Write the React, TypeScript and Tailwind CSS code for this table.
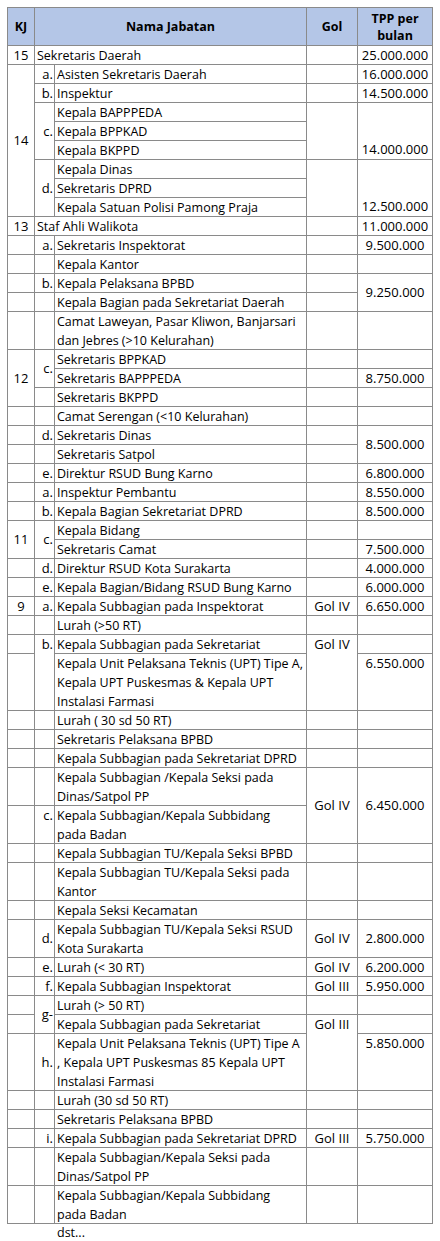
import type { ReactNode } from "react";

type CellProps = { children?: ReactNode; c?: string; v?: string };

const cell = "bg-white flex min-w-0 whitespace-nowrap";

// KJ column
function K({ children, c = "", v = "items-center" }: CellProps) {
  return <div className={`${cell} justify-center ${v} ${c}`}>{children}</div>;
}

// letter column (a. b. c.)
function L({ children, c = "", v = "items-center" }: CellProps) {
  return <div className={`${cell} justify-end pr-[1px] ${v} ${c}`}>{children}</div>;
}

// nama jabatan, single line
function N({ children, c = "" }: CellProps) {
  return <div className={`${cell} items-center pl-[2px] text-[12.5px] ${c}`}>{children}</div>;
}

// nama jabatan, wrapped over several lines
function M({ lines, c = "" }: { lines: string[]; c?: string }) {
  return (
    <div className={`bg-white min-w-0 whitespace-nowrap pl-[2px] text-[12.5px] leading-[19px] ${c}`}>
      {lines.map((l, i) => (
        <div key={i}>{l}</div>
      ))}
    </div>
  );
}

// gol + tpp columns
function V({ children, c = "", v = "items-center" }: CellProps) {
  return <div className={`${cell} justify-center ${v} ${c}`}>{children}</div>;
}

function Head() {
  const h = "bg-[#b4c6e7] flex items-center justify-center font-bold text-[12.5px] row-span-2";
  return (
    <>
      <div className={h}>KJ</div>
      <div className={`${h} col-span-2`}>Nama Jabatan</div>
      <div className={h}>Gol</div>
      <div className={`${h} flex-col leading-[17px]`}>
        <span>TPP per</span>
        <span>bulan</span>
      </div>
    </>
  );
}

export default function App() {
  return (
    <div
      className="min-h-screen bg-white pt-[7px] pl-[7px] text-[13px] leading-[19px] text-black"
      style={{ fontFamily: '"Open Sans", "Noto Sans", sans-serif' }}
    >
      <div className="grid w-[426px] grid-cols-[26px_19px_251px_50px_74px] auto-rows-[18px] gap-px bg-[#8a8a8a] p-px">
        <Head />

        {/* 15 */}
        <K>15</K>
        <N c="col-span-2">Sekretaris Daerah</N>
        <V />
        <V>25.000.000</V>

        {/* 14 */}
        <K c="row-span-8">14</K>
        <L>a.</L>
        <N>Asisten Sekretaris Daerah</N>
        <V />
        <V>16.000.000</V>

        <L>b.</L>
        <N>Inspektur</N>
        <V />
        <V>14.500.000</V>

        <L c="row-span-3">c.</L>
        <N>Kepala BAPPPEDA</N>
        <V c="row-span-3" />
        <V c="row-span-3" v="items-end">14.000.000</V>
        <N>Kepala BPPKAD</N>
        <N>Kepala BKPPD</N>

        <L c="row-span-3">d.</L>
        <N>Kepala Dinas</N>
        <V c="row-span-3" />
        <V c="row-span-3" v="items-end">12.500.000</V>
        <N>Sekretaris DPRD</N>
        <N>Kepala Satuan Polisi Pamong Praja</N>

        {/* 13 */}
        <K>13</K>
        <N c="col-span-2">Staf Ahli Walikota</N>
        <V />
        <V>11.000.000</V>

        {/* 12 */}
        <K />
        <L>a.</L>
        <N>Sekretaris Inspektorat</N>
        <V />
        <V>9.500.000</V>

        <K />
        <L />
        <N>Kepala Kantor</N>
        <V />
        <V />

        <K />
        <L>b.</L>
        <N>Kepala Pelaksana BPBD</N>
        <V />
        <V c="row-span-2">9.250.000</V>

        <K />
        <L />
        <N>Kepala Bagian pada Sekretariat Daerah</N>
        <V />

        <K c="row-span-2" />
        <L c="row-span-2" />
        <M c="row-span-2" lines={["Camat Laweyan, Pasar Kliwon, Banjarsari", "dan Jebres (>10 Kelurahan)"]} />
        <V c="row-span-2" />
        <V c="row-span-2" />

        <K c="row-span-3">12</K>
        <L c="row-span-2">c.</L>
        <N>Sekretaris BPPKAD</N>
        <V />
        <V />

        <N>Sekretaris BAPPPEDA</N>
        <V />
        <V>8.750.000</V>

        <L />
        <N>Sekretaris BKPPD</N>
        <V />
        <V />

        <K />
        <L />
        <N>Camat Serengan (&lt;10 Kelurahan)</N>
        <V />
        <V />

        <K />
        <L>d.</L>
        <N>Sekretaris Dinas</N>
        <V />
        <V c="row-span-2">8.500.000</V>

        <K />
        <L />
        <N>Sekretaris Satpol</N>
        <V />

        <K />
        <L>e.</L>
        <N>Direktur RSUD Bung Karno</N>
        <V />
        <V>6.800.000</V>

        {/* 11 */}
        <K />
        <L>a.</L>
        <N>Inspektur Pembantu</N>
        <V />
        <V>8.550.000</V>

        <K />
        <L>b.</L>
        <N>Kepala Bagian Sekretariat DPRD</N>
        <V />
        <V>8.500.000</V>

        <K c="row-span-2">11</K>
        <L c="row-span-2">c.</L>
        <N>Kepala Bidang</N>
        <V />
        <V />

        <N>Sekretaris Camat</N>
        <V />
        <V>7.500.000</V>

        <K />
        <L>d.</L>
        <N>Direktur RSUD Kota Surakarta</N>
        <V />
        <V>4.000.000</V>

        <K />
        <L>e.</L>
        <N>Kepala Bagian/Bidang RSUD Bung Karno</N>
        <V />
        <V>6.000.000</V>

        {/* 9 */}
        <K>9</K>
        <L>a.</L>
        <N>Kepala Subbagian pada Inspektorat</N>
        <V>Gol IV</V>
        <V>6.650.000</V>

        <K />
        <L />
        <N>Lurah (&gt;50 RT)</N>
        <V />
        <V />

        <K />
        <L c="row-span-4" v="items-start">b.</L>
        <N>Kepala Subbagian pada Sekretariat</N>
        <V c="row-span-4" v="items-start">Gol IV</V>
        <V />

        <K c="row-span-3" />
        <M
          c="row-span-3"
          lines={["Kepala Unit Pelaksana Teknis (UPT) Tipe A,", "Kepala UPT Puskesmas & Kepala UPT", "Instalasi Farmasi"]}
        />
        <V c="row-span-3" v="items-start">6.550.000</V>

        <K />
        <L />
        <N>Lurah ( 30 sd 50 RT)</N>
        <V />
        <V />

        <K />
        <L />
        <N>Sekretaris Pelaksana BPBD</N>
        <V />
        <V />

        <K />
        <L />
        <N>Kepala Subbagian pada Sekretariat DPRD</N>
        <V />
        <V />

        <K c="row-span-2" />
        <L c="row-span-2" />
        <M c="row-span-2" lines={["Kepala Subbagian /Kepala Seksi pada", "Dinas/Satpol PP"]} />
        <V c="row-span-4">Gol IV</V>
        <V c="row-span-4">6.450.000</V>

        <K c="row-span-2" />
        <L c="row-span-2" v="items-start">c.</L>
        <M c="row-span-2" lines={["Kepala Subbagian/Kepala Subbidang", "pada Badan"]} />

        <K />
        <L />
        <N>Kepala Subbagian TU/Kepala Seksi BPBD</N>
        <V />
        <V />

        <K c="row-span-2" />
        <L c="row-span-2" />
        <M c="row-span-2" lines={["Kepala Subbagian TU/Kepala Seksi pada", "Kantor"]} />
        <V c="row-span-2" />
        <V c="row-span-2" />

        <K />
        <L />
        <N>Kepala Seksi Kecamatan</N>
        <V />
        <V />

        <K c="row-span-2" />
        <L c="row-span-2">d.</L>
        <M c="row-span-2" lines={["Kepala Subbagian TU/Kepala Seksi RSUD", "Kota Surakarta"]} />
        <V c="row-span-2">Gol IV</V>
        <V c="row-span-2">2.800.000</V>

        <K />
        <L>e.</L>
        <N>Lurah (&lt; 30 RT)</N>
        <V>Gol IV</V>
        <V>6.200.000</V>

        <K />
        <L>f.</L>
        <N>Kepala Subbagian Inspektorat</N>
        <V>Gol III</V>
        <V>5.950.000</V>

        <K />
        <L c="row-span-2">g-</L>
        <N>Lurah (&gt; 50 RT)</N>
        <V />
        <V />

        <K />
        <N>Kepala Subbagian pada Sekretariat</N>
        <V c="row-span-4" v="items-start">Gol III</V>
        <V />

        <K c="row-span-3" />
        <L c="row-span-3">h.</L>
        <M
          c="row-span-3"
          lines={["Kepala Unit Pelaksana Teknis (UPT) Tipe A", ", Kepala UPT Puskesmas 85 Kepala UPT", "Instalasi Farmasi"]}
        />
        <V c="row-span-3" v="items-start">5.850.000</V>

        <K />
        <L />
        <N>Lurah (30 sd 50 RT)</N>
        <V />
        <V />

        <K />
        <L />
        <N>Sekretaris Pelaksana BPBD</N>
        <V />
        <V />

        <K />
        <L>i.</L>
        <N>Kepala Subbagian pada Sekretariat DPRD</N>
        <V>Gol III</V>
        <V>5.750.000</V>

        <K c="row-span-2" />
        <L c="row-span-2" />
        <M c="row-span-2" lines={["Kepala Subbagian/Kepala Seksi pada", "Dinas/Satpol PP"]} />
        <V c="row-span-2" />
        <V c="row-span-2" />

        <K c="row-span-2" />
        <L c="row-span-2" />
        <M c="row-span-2" lines={["Kepala Subbagian/Kepala Subbidang", "pada Badan"]} />
        <V c="row-span-2" />
        <V c="row-span-2" />
      </div>
      <div className="pl-[50px] text-[12.5px] leading-[18px]">dst...</div>
    </div>
  );
}
